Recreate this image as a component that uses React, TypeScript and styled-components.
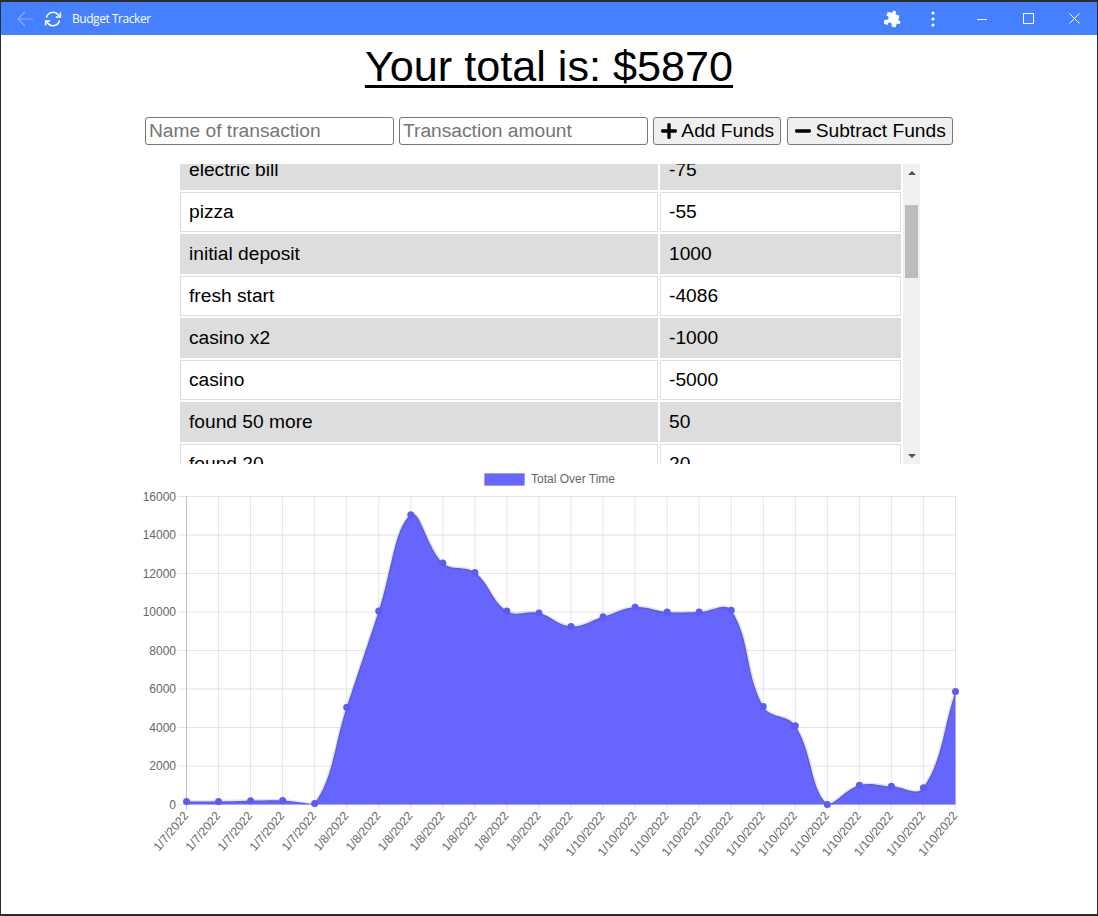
import React, { useLayoutEffect, useRef } from "react";
import styled, { createGlobalStyle } from "styled-components";
import { FaPlus, FaMinus } from "react-icons/fa";

const GlobalStyle = createGlobalStyle`
  html, body {
    margin: 0;
    padding: 0;
    background: #2b2b2b;
  }
  * {
    box-sizing: border-box;
  }
`;

// Window shell
const Frame = styled.div`
  height: 916px;
  padding: 2px 1px 2px 1px;
  background: #2b2b2b;
`;

const Page = styled.div`
  height: 100%;
  background: #fff;
  font-family: "Liberation Sans", Arial, sans-serif;
  overflow: hidden;
`;

const TitleBar = styled.header`
  height: 33px;
  background: #4480ff;
  color: #fff;
  display: flex;
  align-items: center;
  justify-content: space-between;
`;

const TitleLeft = styled.div`
  display: flex;
  align-items: center;
`;

const TitleRight = styled.div`
  display: flex;
  align-items: center;
`;

const BarIcon = styled.button<{ $w: number; $faded?: boolean }>`
  width: ${(p) => p.$w}px;
  height: 33px;
  padding: 0;
  border: none;
  background: none;
  color: #fff;
  opacity: ${(p) => (p.$faded ? 0.35 : 1)};
  display: flex;
  align-items: center;
  justify-content: center;
`;

const AppName = styled.span`
  font-family: "Open Sans", sans-serif;
  font-size: 12px;
  letter-spacing: -0.45px;
  margin-left: 8px;
`;

// Balance + form
const Total = styled.h1`
  margin: 4px 0 23px;
  font-size: 43.2px;
  font-weight: 400;
  line-height: 55px;
  text-align: center;
  text-decoration: underline;
  text-decoration-thickness: 3px;
  text-underline-offset: 4px;
`;

const EntryForm = styled.form`
  display: flex;
  justify-content: center;
  gap: 5px;
`;

const Field = styled.input`
  width: 249px;
  height: 28px;
  padding: 1px 3px;
  border: 1px solid #767676;
  border-radius: 3px;
  font-family: inherit;
  font-size: 19.2px;
  background: #fff;

  &::placeholder {
    color: #757575;
  }
`;

const FundsButton = styled.button<{ $w: number }>`
  width: ${(p) => p.$w}px;
  height: 28px;
  padding: 0;
  border: 1px solid #767676;
  border-radius: 3px;
  background: #efefef;
  color: #000;
  font-family: inherit;
  font-size: 19.2px;
  display: flex;
  align-items: center;
  justify-content: center;
  gap: 3.5px;

  & + & {
    margin-left: 1px;
  }
`;

// Transactions table with its scrollbar
const TableArea = styled.div`
  width: 742px;
  height: 300px;
  margin: 19px auto 0;
  display: flex;
`;

const TableScroll = styled.div`
  width: 725px;
  height: 300px;
  overflow-y: auto;
  scrollbar-width: none;
`;

const Table = styled.table`
  width: 725px;
  border-collapse: separate;
  border-spacing: 2px;
  table-layout: fixed;
  font-size: 19.2px;
  color: #000;
`;

const Row = styled.tr`
  &:nth-child(odd) td {
    background: #ddd;
  }
`;

const Cell = styled.td`
  height: 40px;
  padding: 8px;
  border: 1px solid #ddd;
  line-height: 22px;
`;

const NameCol = styled.col`
  width: 478px;
`;

const ScrollTrack = styled.div`
  width: 17px;
  height: 300px;
  background: #f1f1f1;
  display: flex;
  flex-direction: column;
  align-items: center;
`;

const ScrollArrow = styled.div<{ $down?: boolean }>`
  height: 17px;
  flex: none;
  display: flex;
  align-items: center;
  justify-content: center;

  &::before {
    content: "";
    border-left: 4px solid transparent;
    border-right: 4px solid transparent;
    border-${(p) => (p.$down ? "top" : "bottom")}: 4px solid #505050;
  }
`;

const ScrollGutter = styled.div`
  flex: 1;
  width: 100%;
  padding: 24px 2px 0;
`;

const ScrollThumb = styled.div`
  height: 73px;
  background: #bdbdbd;
`;

const ChartSvg = styled.svg`
  display: block;
  width: 820px;
  height: 412px;
  margin: 4px 0 0 139px;
  font-family: "Liberation Sans", Arial, sans-serif;
`;

const transactions = [
  { name: "paycheck", value: 5000 },
  { name: "coffee", value: -5 },
  { name: "electric bill", value: -75 },
  { name: "pizza", value: -55 },
  { name: "initial deposit", value: 1000 },
  { name: "fresh start", value: -4086 },
  { name: "casino x2", value: -1000 },
  { name: "casino", value: -5000 },
  { name: "found 50 more", value: 50 },
  { name: "found 20", value: 20 },
  { name: "rent", value: -100 },
];

const labels = [
  ...Array(5).fill("1/7/2022"),
  ...Array(6).fill("1/8/2022"),
  ...Array(2).fill("1/9/2022"),
  ...Array(12).fill("1/10/2022"),
];

const totals = [
  150, 160, 200, 210, 50, 5050, 10050, 15050, 12550, 12050, 10050, 9950, 9250,
  9750, 10250, 10000, 10000, 10086, 5086, 4086, 0, 1000, 945, 870, 5870,
];

const LEFT = 186.5;
const RIGHT = 955.5;
const TOP = 496.5;
const BOTTOM = 804.5;

const xAt = (i: number) => LEFT + (i * (RIGHT - LEFT)) / (totals.length - 1);
const yAt = (v: number) => BOTTOM - (v / 16000) * (BOTTOM - TOP);

// same spline as the chart lib: tension 0.4, control points capped to the plot
function linePath() {
  const pts = totals.map((v, i) => ({ x: xAt(i), y: yAt(v) }));
  const cap = (n: number, lo: number, hi: number) => Math.min(hi, Math.max(lo, n));
  const ctrl = pts.map((p, i) => {
    const a = pts[Math.max(i - 1, 0)];
    const b = pts[Math.min(i + 1, pts.length - 1)];
    const d01 = Math.hypot(p.x - a.x, p.y - a.y);
    const d12 = Math.hypot(b.x - p.x, b.y - p.y);
    const fa = (0.4 * d01) / (d01 + d12 || 1);
    const fb = (0.4 * d12) / (d01 + d12 || 1);
    return {
      px: cap(p.x - fa * (b.x - a.x), LEFT, RIGHT),
      py: cap(p.y - fa * (b.y - a.y), TOP, BOTTOM),
      nx: cap(p.x + fb * (b.x - a.x), LEFT, RIGHT),
      ny: cap(p.y + fb * (b.y - a.y), TOP, BOTTOM),
    };
  });
  let d = `M${pts[0].x} ${pts[0].y}`;
  for (let i = 1; i < pts.length; i++) {
    d += ` C${ctrl[i - 1].nx} ${ctrl[i - 1].ny} ${ctrl[i].px} ${ctrl[i].py} ${pts[i].x} ${pts[i].y}`;
  }
  return d;
}

const yTicks = [0, 2000, 4000, 6000, 8000, 10000, 12000, 14000, 16000];
const GRID = "rgba(0,0,0,0.1)";

const TotalChart: React.FC = () => {
  const line = linePath();
  return (
    <ChartSvg viewBox="140 468 820 412">
      <rect x="484.5" y="473.5" width="40" height="12" fill="#6666ff" stroke="rgba(0,0,0,0.1)" />
      <text x="531" y="483" fontSize="12" fill="#666">
        Total Over Time
      </text>

      {yTicks.map((t) => (
        <g key={t}>
          <line x1={LEFT - 9} x2={RIGHT} y1={yAt(t)} y2={yAt(t)} stroke={GRID} />
          <text x={176} y={yAt(t) + 4} fontSize="12" fill="#666" textAnchor="end">
            {t}
          </text>
        </g>
      ))}
      {labels.map((l, i) => (
        <g key={i}>
          <line
            x1={xAt(i)}
            x2={xAt(i)}
            y1={TOP}
            y2={BOTTOM + 5}
            stroke={i === 0 ? "rgba(0,0,0,0.25)" : GRID}
          />
          <text
            fontSize="12"
            fill="#666"
            textAnchor="end"
            transform={`translate(${xAt(i) + 2.5} 816) rotate(-50)`}
          >
            {l}
          </text>
        </g>
      ))}

      <path d={`${line} L${RIGHT} ${BOTTOM} L${LEFT} ${BOTTOM} Z`} fill="#6666ff" />
      <path d={line} fill="none" stroke="rgba(0,0,0,0.1)" strokeWidth="3" />
      {totals.map((v, i) => (
        <circle key={i} cx={xAt(i)} cy={yAt(v)} r="3.5" fill="#5c5cf5" />
      ))}
    </ChartSvg>
  );
};

const App: React.FC = () => {
  const scroller = useRef<HTMLDivElement>(null);

  useLayoutEffect(() => {
    if (scroller.current) scroller.current.scrollTop = 100;
  }, []);

  return (
    <Frame>
      <GlobalStyle />
      <Page>
        <TitleBar>
          <TitleLeft>
            <BarIcon $w={34} $faded style={{ marginLeft: 7 }}>
              <svg width="18" height="18" viewBox="0 0 18 18" fill="none" stroke="currentColor" strokeWidth="1.2">
                <path d="M17 9H2M9 2L2 9l7 7" />
              </svg>
            </BarIcon>
            <BarIcon $w={22}>
              <svg width="18" height="18" viewBox="0 0 18 18" fill="none" stroke="currentColor" strokeWidth="1.5">
                <path d="M2.5 7.5A6.7 6.7 0 0 1 14.4 5l1.6 2" />
                <path d="M16.4 2.4V7h-4.6" />
                <path d="M15.5 10.5A6.7 6.7 0 0 1 3.6 13L2 11" />
                <path d="M1.6 15.6V11h4.6" />
              </svg>
            </BarIcon>
            <AppName>Budget Tracker</AppName>
          </TitleLeft>
          <TitleRight>
            <BarIcon $w={40}>
              <svg width="18" height="18" viewBox="0 0 24 24" fill="currentColor">
                <path
                  transform="rotate(20 12 12)"
                  d="M20.5 11H19V7c0-1.1-.9-2-2-2h-4V3.5C13 2.12 11.88 1 10.5 1S8 2.12 8 3.5V5H4c-1.1 0-1.99.9-1.99 2v3.8H3.5c1.49 0 2.7 1.21 2.7 2.7s-1.21 2.7-2.7 2.7H2V20c0 1.1.9 2 2 2h3.8v-1.5c0-1.49 1.21-2.7 2.7-2.7 1.49 0 2.7 1.21 2.7 2.7V22H17c1.1 0 2-.9 2-2v-4h1.5c1.38 0 2.5-1.12 2.5-2.5S21.88 11 20.5 11z"
                />
              </svg>
            </BarIcon>
            <BarIcon $w={40} style={{ marginRight: 6 }}>
              <svg width="4" height="16" viewBox="0 0 4 16" fill="currentColor">
                <circle cx="2" cy="2" r="1.6" />
                <circle cx="2" cy="8" r="1.6" />
                <circle cx="2" cy="14" r="1.6" />
              </svg>
            </BarIcon>
            <BarIcon $w={46}>
              <svg width="10" height="10" viewBox="0 0 10 10" stroke="currentColor">
                <path d="M0 5.5h10" />
              </svg>
            </BarIcon>
            <BarIcon $w={46}>
              <svg width="11" height="11" viewBox="0 0 11 11" fill="none" stroke="currentColor">
                <rect x="0.5" y="0.5" width="10" height="10" />
              </svg>
            </BarIcon>
            <BarIcon $w={46}>
              <svg width="11" height="11" viewBox="0 0 11 11" fill="none" stroke="currentColor">
                <path d="M0.5 0.5l10 10M10.5 0.5l-10 10" />
              </svg>
            </BarIcon>
          </TitleRight>
        </TitleBar>

        <Total>Your total is: $5870</Total>

        <EntryForm>
          <Field placeholder="Name of transaction" />
          <Field placeholder="Transaction amount" />
          <FundsButton type="button" $w={128}>
            <FaPlus size={18} />
            Add Funds
          </FundsButton>
          <FundsButton type="button" $w={166}>
            <FaMinus size={18} />
            Subtract Funds
          </FundsButton>
        </EntryForm>

        <TableArea>
          <TableScroll ref={scroller}>
            <Table>
              <colgroup>
                <NameCol />
                <col />
              </colgroup>
              <tbody>
                {transactions.map((t) => (
                  <Row key={t.name}>
                    <Cell>{t.name}</Cell>
                    <Cell>{t.value}</Cell>
                  </Row>
                ))}
              </tbody>
            </Table>
          </TableScroll>
          <ScrollTrack>
            <ScrollArrow />
            <ScrollGutter>
              <ScrollThumb />
            </ScrollGutter>
            <ScrollArrow $down />
          </ScrollTrack>
        </TableArea>

        <TotalChart />
      </Page>
    </Frame>
  );
};

export default App;
